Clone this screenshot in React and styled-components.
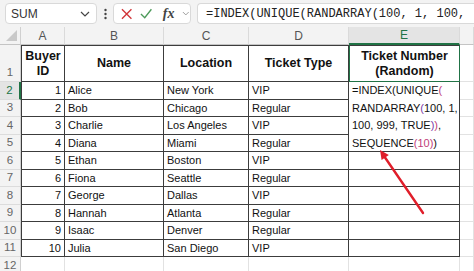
import styled, { createGlobalStyle } from "styled-components";

const GlobalStyle = createGlobalStyle`
  body {
    margin: 0;
    background: #fff;
    font-family: "Liberation Sans", Arial, sans-serif;
  }
`;

const Page = styled.div`
  position: relative;
  width: 474px;
  height: 271px;
  overflow: hidden;
  display: flex;
  flex-direction: column;
  background: #fff;
`;

const FormulaBar = styled.div`
  height: 27px;
  flex: none;
  display: flex;
  align-items: center;
  padding-left: 5px;
  background: #f3f3f3;
  box-sizing: border-box;
`;

const Box = styled.div`
  height: 21px;
  box-sizing: border-box;
  background: #fff;
  border: 1px solid #d9d9d9;
  border-radius: 4px;
  display: flex;
  align-items: center;
`;

const NameBox = styled(Box)`
  width: 92px;
  justify-content: space-between;
  padding: 0 6px 0 5px;
  font-size: 12px;
  color: #333;
`;

const Dots = styled.div`
  width: 16px;
  display: flex;
  justify-content: center;
`;

const ButtonBox = styled(Box)`
  width: 78px;
  gap: 8px;
  padding-left: 7px;
`;

const Fx = styled.span`
  font-family: "Liberation Serif", serif;
  font-style: italic;
  font-weight: bold;
  font-size: 14px;
  color: #444;
  margin-left: 2px;
`;

const FormulaInput = styled(Box)`
  flex: 1;
  margin-left: 6px;
  border-right: none;
  border-radius: 4px 0 0 4px;
  padding-left: 8px;
  font-family: "Liberation Mono", monospace;
  font-size: 12px;
  color: #222;
  white-space: nowrap;
`;

const Sheet = styled.div`
  display: grid;
  grid-template-columns: 21px 44px 99px 85px 100px 111px 1fr;
  grid-template-rows: 18px 37px repeat(11, 17.5px);
  font-size: 11px;
  color: #111;
`;

const Corner = styled.div`
  background: #f3f3f3;
  border-right: 1px solid #d0d0d0;
  border-bottom: 1px solid #c4c4c4;
  display: flex;
  align-items: flex-end;
  justify-content: flex-end;
  padding: 0 3px 3px 0;
  box-sizing: border-box;
`;

const Triangle = styled.span`
  width: 0;
  height: 0;
  border-left: 11px solid transparent;
  border-bottom: 11px solid #c9c9c9;
`;

const ColHead = styled.div`
  background: ${(p) => (p.$active ? "#e4e4e4" : "#f3f3f3")};
  border-right: 1px solid #dadada;
  border-bottom: ${(p) => (p.$active ? "2px solid #217346" : "1px solid #c4c4c4")};
  color: ${(p) => (p.$active ? "#217346" : "#555")};
  font-size: 12px;
  display: flex;
  align-items: center;
  justify-content: center;
  box-sizing: border-box;
`;

const RowHead = styled.div`
  background: ${(p) => (p.$active ? "#e4e4e4" : "#f3f3f3")};
  border-right: ${(p) => (p.$active ? "2px solid #217346" : "1px solid #d0d0d0")};
  border-bottom: 1px solid #dcdcdc;
  color: ${(p) => (p.$active ? "#217346" : "#666")};
  font-size: 11.5px;
  display: flex;
  align-items: flex-end;
  justify-content: center;
  line-height: 17px;
  box-sizing: border-box;
`;

const Cell = styled.div`
  box-sizing: border-box;
  border-right: 1px solid ${(p) => (p.$grid ? "#e2e2e2" : "#3c3c3c")};
  border-bottom: 1px solid ${(p) => (p.$grid ? "#e2e2e2" : "#3c3c3c")};
  border-left: ${(p) => (p.$first ? "1px solid #3c3c3c" : "none")};
  border-top: ${(p) => (p.$top ? "1px solid #3c3c3c" : "none")};
  text-align: ${(p) => p.$align || "left"};
  padding: 0 3px;
  line-height: 17.5px;
  white-space: nowrap;
  overflow: hidden;
`;

const HeadCell = styled(Cell)`
  font-weight: bold;
  font-size: 12.5px;
  line-height: 15px;
  white-space: normal;
  display: flex;
  align-items: center;
  justify-content: center;
  text-align: center;
  padding: 0 2px;
  ${(p) =>
    p.$selected &&
    `border-left: 1px solid #217346; border-right: 1px solid #217346; border-bottom: 1px solid #217346;`}
`;

const EditCell = styled(Cell)`
  grid-row: span 4;
  border-right-color: #3c3c3c;
  padding-left: 3px;
  white-space: pre;
`;

const Paren = styled.span`
  color: ${(p) => p.$c};
`;

const Arrow = styled.svg`
  position: absolute;
  left: 370px;
  top: 140px;
`;

const rows = [
  [1, "Alice", "New York", "VIP"],
  [2, "Bob", "Chicago", "Regular"],
  [3, "Charlie", "Los Angeles", "VIP"],
  [4, "Diana", "Miami", "Regular"],
  [5, "Ethan", "Boston", "VIP"],
  [6, "Fiona", "Seattle", "Regular"],
  [7, "George", "Dallas", "VIP"],
  [8, "Hannah", "Atlanta", "Regular"],
  [9, "Isaac", "Denver", "Regular"],
  [10, "Julia", "San Diego", "VIP"],
];

const PINK = "#c0407a";
const PURPLE = "#7a3aa8";

export default function App() {
  return (
    <Page>
      <GlobalStyle />
      <FormulaBar>
        <NameBox>
          SUM
          <svg width="10" height="6" viewBox="0 0 10 6">
            <path d="M1 1l4 4 4-4" fill="none" stroke="#444" strokeWidth="1.2" />
          </svg>
        </NameBox>
        <Dots>
          <svg width="3" height="12" viewBox="0 0 3 12">
            <circle cx="1.5" cy="2" r="1.2" fill="#444" />
            <circle cx="1.5" cy="6" r="1.2" fill="#444" />
            <circle cx="1.5" cy="10" r="1.2" fill="#444" />
          </svg>
        </Dots>
        <ButtonBox>
          <svg width="12" height="12" viewBox="0 0 12 12">
            <path d="M1 1l10 10M11 1L1 11" stroke="#d13438" strokeWidth="1.4" />
          </svg>
          <svg width="13" height="11" viewBox="0 0 13 11">
            <path d="M1 6l4 4 7-9" fill="none" stroke="#4c9a5a" strokeWidth="1.4" />
          </svg>
          <Fx>fx</Fx>
          <svg width="8" height="5" viewBox="0 0 8 5">
            <path d="M1 1l3 3 3-3" fill="none" stroke="#999" strokeWidth="1" />
          </svg>
        </ButtonBox>
        <FormulaInput>=INDEX(UNIQUE(RANDARRAY(100, 1, 100,</FormulaInput>
      </FormulaBar>

      <Sheet>
        <Corner>
          <Triangle />
        </Corner>
        {["A", "B", "C", "D", "E", ""].map((l) => (
          <ColHead key={l} $active={l === "E"}>{l}</ColHead>
        ))}

        <RowHead>1</RowHead>
        <HeadCell $first $top>Buyer ID</HeadCell>
        <HeadCell $top>Name</HeadCell>
        <HeadCell $top>Location</HeadCell>
        <HeadCell $top>Ticket Type</HeadCell>
        <HeadCell $top $selected>Ticket Number (Random)</HeadCell>
        <Cell $grid />

        {rows.map(([id, name, loc, type], i) => (
          <Row key={id} idx={i} id={id} name={name} loc={loc} type={type} />
        ))}

        <RowHead>12</RowHead>
        {[0, 1, 2, 3, 4, 5].map((k) => (
          <Cell key={k} $grid />
        ))}
      </Sheet>

      <Arrow width="60" height="80" viewBox="0 0 60 80">
        <path d="M53 73L14 16" stroke="#e01e2a" strokeWidth="2.4" strokeLinecap="round" />
        <path d="M10 10L18.8 15L11.6 20Z" fill="#e01e2a" />
      </Arrow>
    </Page>
  );
}

function Row({ idx, id, name, loc, type }) {
  return (
    <>
      <RowHead $active={idx === 0}>{idx + 2}</RowHead>
      <Cell $first $align="right">{id}</Cell>
      <Cell>{name}</Cell>
      <Cell>{loc}</Cell>
      <Cell>{type}</Cell>
      {idx === 0 && (
        <EditCell>
          {"=INDEX(UNIQUE"}<Paren $c={PINK}>(</Paren>{"\n"}
          {"RANDARRAY"}<Paren $c={PURPLE}>(</Paren>{"100, 1,\n"}
          {"100, 999, TRUE"}<Paren $c={PURPLE}>)</Paren><Paren $c={PINK}>)</Paren>{",\n"}
          {"SEQUENCE"}<Paren $c={PINK}>(</Paren><Paren $c={PINK}>10</Paren><Paren $c={PINK}>)</Paren>{")"}
        </EditCell>
      )}
      {idx > 3 && <Cell />}
      <Cell $grid />
    </>
  );
}
